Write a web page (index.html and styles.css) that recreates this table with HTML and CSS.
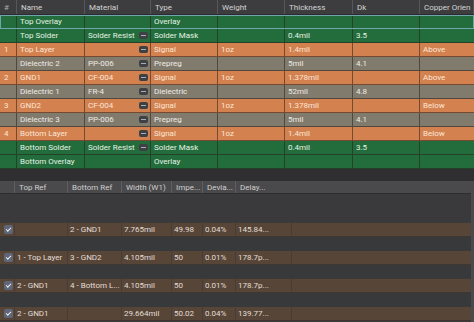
FILE: index.html
```html
<!DOCTYPE html>
<html>
<head>
<meta charset="utf-8">
<link rel="stylesheet" href="styles.css">
</head>
<body>
<div class="app">
  <div class="stack">
    <div class="row head">
      <div class="c">#</div><div class="c">Name</div><div class="c">Material</div><div class="c">Type</div><div class="c">Weight</div><div class="c">Thickness</div><div class="c">Dk</div><div class="c">Copper Orien</div>
    </div>
    <div class="row green sel">
      <div class="c"></div><div class="c">Top Overlay</div><div class="c"></div><div class="c">Overlay</div><div class="c"></div><div class="c"></div><div class="c"></div><div class="c"></div>
    </div>
    <div class="row green">
      <div class="c"></div><div class="c">Top Solder</div><div class="c mat">Solder Resist<span class="btn"></span></div><div class="c">Solder Mask</div><div class="c"></div><div class="c">0.4mil</div><div class="c">3.5</div><div class="c"></div>
    </div>
    <div class="row orange">
      <div class="c">1</div><div class="c">Top Layer</div><div class="c mat"><span class="btn"></span></div><div class="c">Signal</div><div class="c">1oz</div><div class="c">1.4mil</div><div class="c"></div><div class="c">Above</div>
    </div>
    <div class="row gray">
      <div class="c"></div><div class="c">Dielectric 2</div><div class="c mat">PP-006<span class="btn"></span></div><div class="c">Prepreg</div><div class="c"></div><div class="c">5mil</div><div class="c">4.1</div><div class="c"></div>
    </div>
    <div class="row orange">
      <div class="c">2</div><div class="c">GND1</div><div class="c mat">CF-004<span class="btn"></span></div><div class="c">Signal</div><div class="c">1oz</div><div class="c">1.378mil</div><div class="c"></div><div class="c">Above</div>
    </div>
    <div class="row gray">
      <div class="c"></div><div class="c">Dielectric 1</div><div class="c mat">FR-4<span class="btn"></span></div><div class="c">Dielectric</div><div class="c"></div><div class="c">52mil</div><div class="c">4.8</div><div class="c"></div>
    </div>
    <div class="row orange">
      <div class="c">3</div><div class="c">GND2</div><div class="c mat">CF-004<span class="btn"></span></div><div class="c">Signal</div><div class="c">1oz</div><div class="c">1.378mil</div><div class="c"></div><div class="c">Below</div>
    </div>
    <div class="row gray">
      <div class="c"></div><div class="c">Dielectric 3</div><div class="c mat">PP-006<span class="btn"></span></div><div class="c">Prepreg</div><div class="c"></div><div class="c">5mil</div><div class="c">4.1</div><div class="c"></div>
    </div>
    <div class="row orange">
      <div class="c">4</div><div class="c">Bottom Layer</div><div class="c mat"><span class="btn"></span></div><div class="c">Signal</div><div class="c">1oz</div><div class="c">1.4mil</div><div class="c"></div><div class="c">Below</div>
    </div>
    <div class="row green">
      <div class="c"></div><div class="c">Bottom Solder</div><div class="c mat">Solder Resist<span class="btn"></span></div><div class="c">Solder Mask</div><div class="c"></div><div class="c">0.4mil</div><div class="c">3.5</div><div class="c"></div>
    </div>
    <div class="row green">
      <div class="c"></div><div class="c">Bottom Overlay</div><div class="c"></div><div class="c">Overlay</div><div class="c"></div><div class="c"></div><div class="c"></div><div class="c"></div>
    </div>
  </div>
  <div class="spacer"></div>
  <div class="imp">
    <div class="irow ihead">
      <div class="c"></div><div class="c">Top Ref</div><div class="c">Bottom Ref</div><div class="c">Width (W1)</div><div class="c">Impe...</div><div class="c">Devia...</div><div class="c">Delay...</div><div class="c"></div>
    </div>
    <div class="gap first"></div>
    <div class="irow data">
      <div class="c"><span class="chk"></span></div><div class="c"></div><div class="c">2 - GND1</div><div class="c">7.765mil</div><div class="c">49.98</div><div class="c">0.04%</div><div class="c">145.84...</div><div class="c"></div>
    </div>
    <div class="gap"></div>
    <div class="irow data">
      <div class="c"><span class="chk"></span></div><div class="c">1 - Top Layer</div><div class="c">3 - GND2</div><div class="c">4.105mil</div><div class="c">50</div><div class="c">0.01%</div><div class="c">178.7p...</div><div class="c"></div>
    </div>
    <div class="gap"></div>
    <div class="irow data">
      <div class="c"><span class="chk"></span></div><div class="c">2 - GND1</div><div class="c">4 - Bottom L...</div><div class="c">4.105mil</div><div class="c">50</div><div class="c">0.01%</div><div class="c">178.7p...</div><div class="c"></div>
    </div>
    <div class="gap"></div>
    <div class="irow data">
      <div class="c"><span class="chk"></span></div><div class="c">2 - GND1</div><div class="c"></div><div class="c">29.664mil</div><div class="c">50.02</div><div class="c">0.04%</div><div class="c">139.77...</div><div class="c"></div>
    </div>
  </div>
</div>
</body>
</html>
```

FILE: styles.css
```css
* { box-sizing: border-box; }
html, body { margin: 0; padding: 0; }
body {
  width: 474px;
  height: 322px;
  overflow: hidden;
  background: #39393b;
  font-family: Roboto, "Liberation Sans", sans-serif;
  font-size: 8px;
}
.app { display: flex; flex-direction: column; height: 322px; }

.stack { display: flex; flex-direction: column; }
.row {
  display: grid;
  grid-template-columns: 17px 68px 66px 67px 67px 68px 67px 54px;
  height: 14px;
  border-bottom: 1px solid rgba(40, 30, 25, 0.55);
}
.row .c {
  display: flex;
  align-items: center;
  padding-left: 3px;
  white-space: nowrap;
  overflow: hidden;
  border-right: 1px solid rgba(40, 30, 25, 0.55);
}
.row .c:first-child { padding-left: 4px; }
.row .c:last-child { border-right: none; }
.row.head {
  background: #3d3d3f;
  color: #d4d4d4;
  height: 15px;
  border-bottom: 1px solid #2b2b2d;
}
.row.head .c { border-right: 1px solid #57575a; padding-left: 4px; }
.row.head .c:first-child { padding-left: 4px; color: #aaa; }

.green { background: #226d3b; color: #e6f3e6; }
.orange { background: #d2814f; color: #fde6d6; }
.gray { background: #817b6e; color: #efebe4; }
.sel { outline: 1px solid #6fa6ad; outline-offset: -1px; }

.mat { justify-content: space-between; padding-right: 2px; }
.btn {
  width: 9px;
  height: 7px;
  border-radius: 2px;
  background: #3e4044;
  position: relative;
  flex: none;
  margin-left: auto;
}
.btn::after {
  content: "";
  position: absolute;
  left: 2px;
  right: 2px;
  top: 3px;
  height: 1px;
  background: #a9aeb6;
}

.spacer { height: 12px; background: #2f2f31; }

.imp { flex: 1; background: #3a3a3c; border-right: 3px solid #4a4a4c; display: flex; flex-direction: column; }
.irow {
  display: grid;
  grid-template-columns: 15px 53px 54px 50px 31px 33px 56px 1fr;
  height: 14px;
}
.irow .c {
  display: flex;
  align-items: center;
  white-space: nowrap;
  overflow: hidden;
  padding-left: 2px;
}
.ihead { background: #4a4a4c; color: #cfcfcf; height: 13px; border-bottom: 1px solid #2d2d2f; }
.ihead .c { border-right: 1px solid #5e5e60; padding-left: 4px; }
.ihead .c:nth-child(7), .ihead .c:last-child { border-right: none; }
.gap { height: 14px; background: #37393b; }
.gap.first { height: 29px; background: #3a3a3c; }
.data { background: #574638; color: #e4ddd6; border-bottom: 1px solid #3f3630; }
.data .c { border-right: 1px solid #4a3c31; }
.data .c:last-child { border-right: none; }
.chk {
  width: 9px;
  height: 9px;
  border-radius: 2px;
  background: #5e6677;
  margin-left: 2px;
  position: relative;
}
.chk::after {
  content: "";
  position: absolute;
  left: 2px;
  top: 1px;
  width: 4px;
  height: 2px;
  border-left: 1px solid #f0f0f0;
  border-bottom: 1px solid #f0f0f0;
  transform: rotate(-45deg) translate(-1px, 1px);
}
```
